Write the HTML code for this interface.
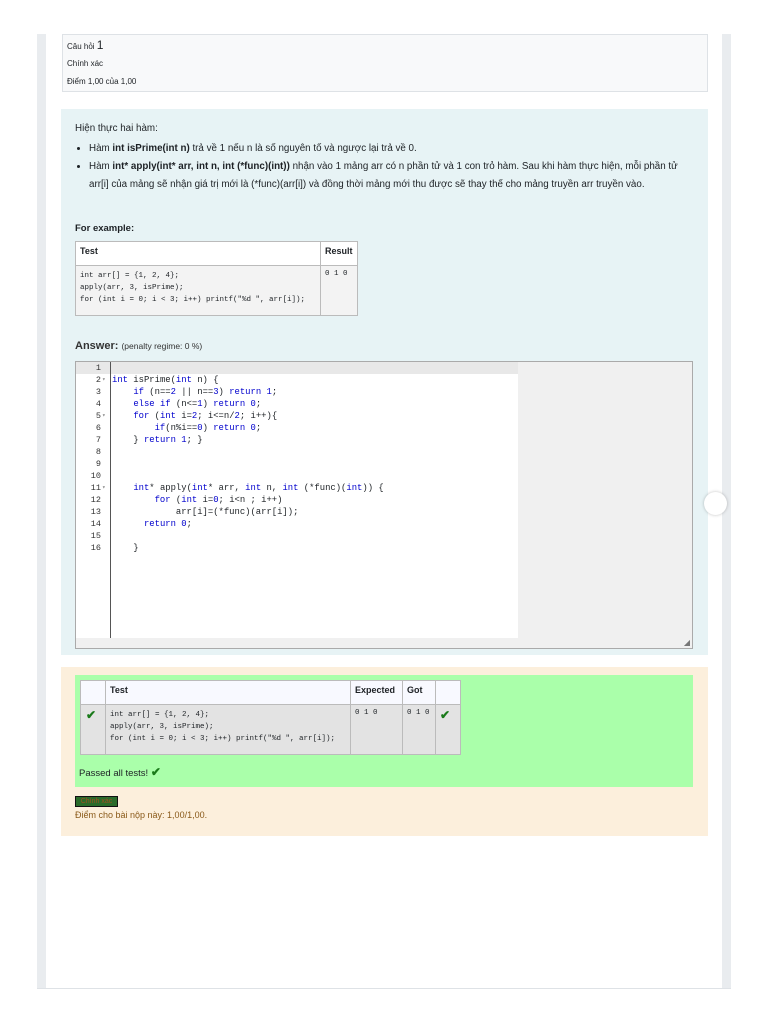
<!DOCTYPE html>
<html><head><meta charset="utf-8"><style>
*{margin:0;padding:0;box-sizing:border-box}
body{width:768px;height:1024px;background:#fff;font-family:"Liberation Sans",sans-serif;position:relative;overflow:hidden;color:#1d2125}
.abs{position:absolute}
.mono{font-family:"Liberation Mono",monospace}
.info{left:62px;top:34px;width:646px;height:58px;background:#f8f9fa;border:1px solid #dee2e6;font-size:8px;padding:4px 4px}
.q{left:61px;top:109px;width:647px;height:546px;background:#e7f3f5}
.ed{left:75px;top:361px;width:618px;height:288px;background:#f0f0f0;border:1px solid #aaa}
.code{font-family:"Liberation Mono",monospace;font-size:8.9px;line-height:12px;white-space:pre}
.kw{color:#0000cd}
table{border-collapse:collapse}
td,th{border:1px solid #bbb;text-align:left;vertical-align:top}
.fb{left:61px;top:667px;width:647px;height:169px;background:#fcefdc}
.green{left:75px;top:675px;width:618px;height:112px;background:#aaffaa}
.chk{color:#1a7a1a;font-size:12px;font-weight:bold}
</style></head><body>
<div class="abs" style="left:37px;top:34px;width:9px;height:954px;background:#e9ecef"></div>
<div class="abs" style="left:722px;top:34px;width:9px;height:954px;background:#e9ecef"></div>
<div class="abs" style="left:37px;top:988px;width:694px;height:1px;background:#dee2e6"></div>

<div class="abs info"><div style="line-height:12px">Câu hỏi <b style="font-size:12px;font-weight:normal">1</b></div><div style="margin-top:6px">Chính xác</div><div style="margin-top:9px">Điểm 1,00 của 1,00</div></div>

<div class="abs q">
<div class="abs" style="left:14px;top:14px;font-size:9.8px">Hiện thực hai hàm:</div>
<ul class="abs" style="left:28px;top:31px;width:610px;font-size:9.8px;line-height:18px">
<li>Hàm <b>int isPrime(int n)</b> trả về 1 nếu n là số nguyên tố và ngược lại trả về 0.</li>
<li>Hàm <b>int* apply(int* arr, int n, int (*func)(int))</b> nhận vào 1 mảng arr có n phần tử và 1 con trỏ hàm. Sau khi hàm thực hiện, mỗi phần tử arr[i] của mảng sẽ nhận giá trị mới là (*func)(arr[i]) và đồng thời mảng mới thu được sẽ thay thế cho mảng truyền arr truyền vào.</li>
</ul>
<div class="abs" style="left:14px;top:114px;font-size:9.5px;font-weight:bold">For example:</div>
<table class="abs" style="left:14px;top:132px;font-size:9px;background:#f3f3f3">
<tr style="background:#fff"><th style="width:245px;height:24px;padding:4px">Test</th><th style="width:37px;padding:4px">Result</th></tr>
<tr><td class="mono" style="font-size:7.5px;line-height:12px;padding:4px;height:50px">int arr[] = {1, 2, 4};<br>apply(arr, 3, isPrime);<br>for (int i = 0; i &lt; 3; i++) printf("%d ", arr[i]);</td><td class="mono" style="font-size:7.5px;padding:4px">0 1 0</td></tr>
</table>
<div class="abs" style="left:14px;top:231px;font-size:11px;font-weight:bold;color:#333">Answer: <span style="font-size:8.5px;font-weight:normal">(penalty regime: 0 %)</span></div>
</div>

<div class="abs ed">
<div class="abs" style="left:0;top:0;width:442px;height:276px;background:#fff"></div>
<div class="abs" style="left:0;top:0;width:442px;height:12px;background:#e8e8e8"></div>
<div class="abs" style="left:34px;top:0;width:1px;height:276px;background:#555"></div>
<div class="abs code" style="left:0;top:0;width:25px;text-align:right;color:#333;font-size:8.5px">1
2
3
4
5
6
7
8
9
10
11
12
13
14
15
16</div>
<div class="abs code" style="left:26px;top:0;color:#888;font-size:6px">
▾


▾





▾</div>
<div class="abs code" style="left:36px;top:0"> 
<span class="kw">int</span> isPrime(<span class="kw">int</span> n) {
    <span class="kw">if</span> (n==<span class="kw">2</span> || n==<span class="kw">3</span>) <span class="kw">return 1</span>;
    <span class="kw">else if</span> (n&lt;=<span class="kw">1</span>) <span class="kw">return 0</span>;
    <span class="kw">for</span> (<span class="kw">int</span> i=<span class="kw">2</span>; i&lt;=n/<span class="kw">2</span>; i++){
        <span class="kw">if</span>(n%i==<span class="kw">0</span>) <span class="kw">return 0</span>;
    } <span class="kw">return 1</span>; }



    <span class="kw">int</span>* apply(<span class="kw">int</span>* arr, <span class="kw">int</span> n, <span class="kw">int</span> (*func)(<span class="kw">int</span>)) {
        <span class="kw">for</span> (<span class="kw">int</span> i=<span class="kw">0</span>; i&lt;n ; i++)
            arr[i]=(*func)(arr[i]);
      <span class="kw">return 0</span>;

    }</div>
<div class="abs" style="right:2px;bottom:1px;font-size:8px;color:#777">◢</div>
</div>
<div class="abs" style="left:704px;top:492px;width:23px;height:23px;border-radius:50%;background:#fff;box-shadow:0 0 3px rgba(0,0,0,.25)"></div>

<div class="abs fb">
<div class="abs green" style="left:14px;top:8px"></div>
<table class="abs" style="left:19px;top:13px;font-size:9px;background:#e3e3e3">
<tr style="background:#f8f9ff"><th style="width:25px;height:24px"></th><th style="width:245px;padding:4px">Test</th><th style="width:52px;padding:4px">Expected</th><th style="width:33px;padding:4px">Got</th><th style="width:25px"></th></tr>
<tr><td class="chk" style="padding:3px 5px">✔</td><td class="mono" style="font-size:7.5px;line-height:12px;padding:4px;height:50px">int arr[] = {1, 2, 4};<br>apply(arr, 3, isPrime);<br>for (int i = 0; i &lt; 3; i++) printf("%d ", arr[i]);</td><td class="mono" style="font-size:7.5px;padding:4px">0 1 0</td><td class="mono" style="font-size:7.5px;padding:4px">0 1 0</td><td class="chk" style="padding:3px 4px">✔</td></tr>
</table>
<div class="abs" style="left:18px;top:98px;font-size:9.5px">Passed all tests! <span class="chk">✔</span></div>
<div class="abs" style="left:14px;top:129px;width:43px;height:11px;background:#2a6b2a;border:1px solid #111;color:#a05020;font-size:7px;text-align:center;line-height:9px">Chính xác</div>
<div class="abs" style="left:14px;top:143px;font-size:9px;color:#8a5a1a">Điểm cho bài nộp này: 1,00/1,00.</div>
</div>
</body></html>
